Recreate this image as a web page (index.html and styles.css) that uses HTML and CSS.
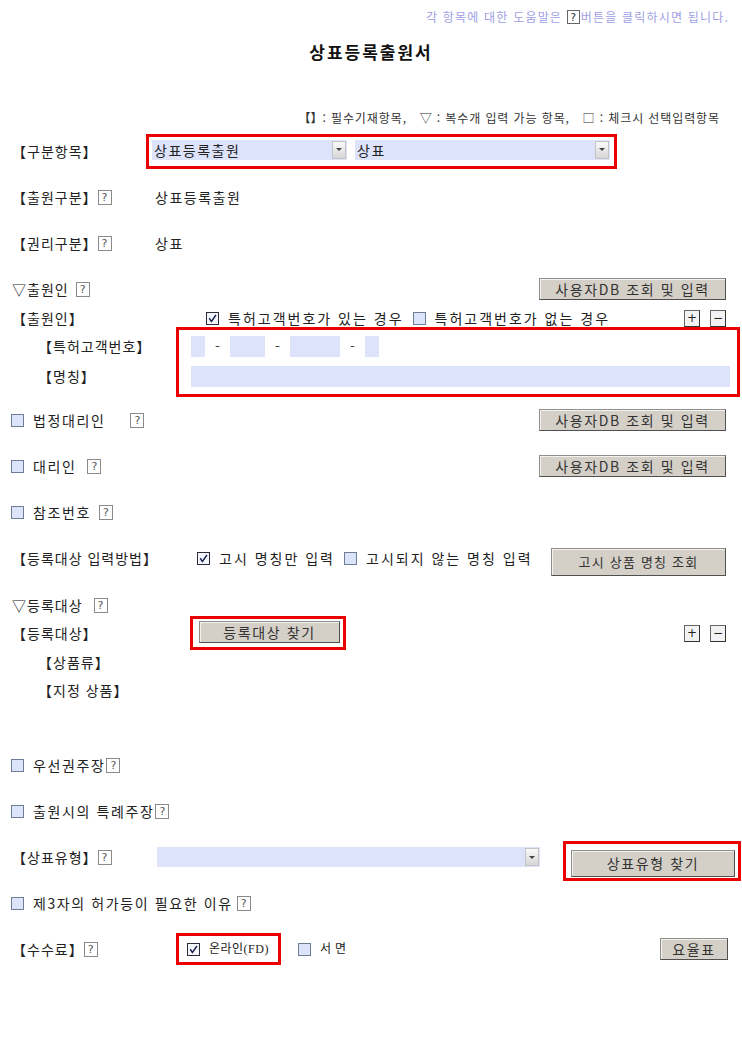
FILE: index.html
```html
<!DOCTYPE html>
<html lang="ko">
<head>
  <meta charset="UTF-8">
  <meta name="viewport" content="width=device-width, initial-scale=1.0">
  <title>상표등록출원서</title>
  <link rel="stylesheet" href="styles.css">
</head>
<body>
  <div class="hint"><span>각 항목에 대한 도움말은 </span><span class="help">?</span><span>버튼을 클릭하시면 됩니다.</span></div>
  <h1 class="title">상표등록출원서</h1>
  <div class="legend"><span class="brk">【】</span>: 필수기재항목,&nbsp;&nbsp; ▽ : 복수개 입력 가능 항목,&nbsp;&nbsp; □ : 체크시 선택입력항목</div>

  <div class="form">
    <!-- 구분항목 -->
    <div class="row first">
      <div class="lbl w137">【구분항목】</div>
      <div class="kind-group marked">
        <div class="select s1"><span class="val">상표등록출원</span><span class="arrow"></span></div>
        <div class="select s2"><span class="val">상표</span><span class="arrow"></span></div>
      </div>
    </div>

    <div class="row">
      <div class="lbl w143">【출원구분】<span class="help">?</span></div>
      <div class="val-text">상표등록출원</div>
    </div>

    <div class="row">
      <div class="lbl w143">【권리구분】<span class="help">?</span></div>
      <div class="val-text">상표</div>
    </div>

    <!-- 출원인 -->
    <div class="row">
      <div class="lbl">▽출원인<span class="help g7">?</span></div>
      <button class="btn db">사용자DB 조회 및 입력</button>
    </div>

    <div class="row tight">
      <div class="lbl w195">【출원인】</div>
      <span class="chk on"><svg viewBox="0 0 13 13"><path d="M2.6 6.2 L5.2 10 L10.6 2.4"/></svg></span>
      <span class="opt">특허고객번호가 있는 경우</span>
      <span class="chk"></span>
      <span class="opt">특허고객번호가 없는 경우</span>
      <div class="pm">
        <span class="pm-btn">+</span>
        <span class="pm-btn">−</span>
      </div>
    </div>

    <div class="detail">
      <div class="detail-labels">
        <div class="sub-row">【특허고객번호】</div>
        <div class="sub-row">【명칭】</div>
      </div>
      <div class="detail-fields marked">
        <div class="sub-row">
          <span class="field f14"></span><span class="dash">-</span>
          <span class="field f35"></span><span class="dash">-</span>
          <span class="field f50"></span><span class="dash">-</span>
          <span class="field f14"></span>
        </div>
        <div class="sub-row">
          <span class="field wide"></span>
        </div>
      </div>
    </div>

    <!-- 대리인 -->
    <div class="row after-detail">
      <span class="chk"></span>
      <span class="opt bare">법정대리인</span><span class="help g26">?</span>
      <button class="btn db">사용자DB 조회 및 입력</button>
    </div>

    <div class="row">
      <span class="chk"></span>
      <span class="opt bare">대리인</span><span class="help g12">?</span>
      <button class="btn db">사용자DB 조회 및 입력</button>
    </div>

    <div class="row">
      <span class="chk"></span>
      <span class="opt bare">참조번호</span><span class="help g9">?</span>
    </div>

    <!-- 등록대상 -->
    <div class="row">
      <div class="lbl w186">【등록대상 입력방법】</div>
      <span class="chk on"><svg viewBox="0 0 13 13"><path d="M2.6 6.2 L5.2 10 L10.6 2.4"/></svg></span>
      <span class="opt">고시 명칭만 입력</span>
      <span class="chk"></span>
      <span class="opt">고시되지 않는 명칭 입력</span>
      <button class="btn notice">고시 상품 명칭 조회</button>
    </div>

    <div class="row gap23">
      <div class="lbl">▽등록대상<span class="help g12">?</span></div>
    </div>

    <div class="row tighter">
      <div class="lbl w181">【등록대상】</div>
      <div class="find-box marked">
        <button class="btn find">등록대상 찾기</button>
      </div>
      <div class="pm">
        <span class="pm-btn">+</span>
        <span class="pm-btn">−</span>
      </div>
    </div>

    <div class="row tight">
      <div class="sub-lbl">【상품류】</div>
    </div>

    <div class="row tighter">
      <div class="sub-lbl">【지정 상품】</div>
    </div>

    <!-- 주장 -->
    <div class="row gap51">
      <span class="chk"></span>
      <span class="opt bare">우선권주장</span><span class="help g2">?</span>
    </div>

    <div class="row">
      <span class="chk"></span>
      <span class="opt bare">출원시의 특례주장</span><span class="help g2">?</span>
    </div>

    <div class="row">
      <div class="lbl w145">【상표유형】<span class="help">?</span></div>
      <div class="select s3"><span class="val"></span><span class="arrow"></span></div>
      <div class="type-box marked">
        <button class="btn type">상표유형 찾기</button>
      </div>
    </div>

    <div class="row">
      <span class="chk"></span>
      <span class="opt bare">제3자의 허가등이 필요한 이유</span><span class="help g5">?</span>
    </div>

    <div class="row">
      <div class="lbl w167">【수수료】<span class="help">?</span></div>
      <div class="fee-box marked">
        <span class="chk on"><svg viewBox="0 0 13 13"><path d="M2.6 6.2 L5.2 10 L10.6 2.4"/></svg></span>
        <span class="opt serif">온라인(FD)</span>
      </div>
      <span class="chk paper"></span>
      <span class="opt serif">서 면</span>
      <button class="btn rate">요율표</button>
    </div>
  </div>
</body>
</html>
```

FILE: styles.css
```css
body {
  margin: 0;
  font-family: "Noto Sans CJK KR", "Noto Sans", sans-serif;
  font-size: 14px;
  color: #222;
  background-color: #fff;
}
.hint {
  display: flex;
  justify-content: flex-end;
  align-items: center;
  height: 16px;
  margin: 9px 13px 0 0;
  font-size: 12px;
  line-height: 16px;
  letter-spacing: 1.2px;
  white-space: pre;
  color: #a0a0e4;
}
.title {
  margin: 15px 0 0;
  height: 24px;
  text-align: center;
  font-size: 17px;
  line-height: 24px;
  font-weight: bold;
  letter-spacing: 2px;
  color: #111;
}
.legend {
  margin: 46px 22px 0 0;
  height: 16px;
  text-align: right;
  font-size: 12px;
  line-height: 16px;
  letter-spacing: 0.9px;
  color: #333;
}
.legend .brk {
  font-weight: bold;
  letter-spacing: 0;
  margin-left: -6px;
}
.form {
  padding: 0 16px 40px 12px;
  letter-spacing: 1px;
}
.row {
  display: flex;
  align-items: center;
  height: 24px;
  margin-top: 22px;
  white-space: nowrap;
  line-height: 20px;
}
.row.first { margin-top: 13px; }
.row.tight { margin-top: 5px; }
.row.tighter { margin-top: 4px; }
.row.gap23 { margin-top: 23px; }
.row.gap51 { margin-top: 51px; }
.row.after-detail { margin-top: 14px; }

.lbl {
  display: flex;
  align-items: center;
  flex-shrink: 0;
}
.w137 { width: 137px; }
.w143 { width: 143px; }
.w145 { width: 145px; }
.w167 { width: 167px; }
.w181 { width: 181px; }
.w186 { width: 186px; }
.w195 { width: 195px; }
.sub-lbl {
  padding-left: 26px;
}
.val-text {
  letter-spacing: 1.5px;
}

.help {
  display: inline-flex;
  align-items: center;
  justify-content: center;
  width: 14px;
  height: 15px;
  box-sizing: border-box;
  border: 1px solid #8a8a8a;
  background-color: #fff;
  color: #555;
  font-family: "DejaVu Sans", sans-serif;
  font-size: 11px;
  line-height: 13px;
  letter-spacing: 0;
  margin-left: 0;
  flex-shrink: 0;
}
.hint .help {
  width: 13px;
  height: 14px;
  color: #333;
  border-color: #666;
  margin: 0 1px 0 0;
}
.help.g26 { margin-left: 25px; }
.help.g12 { margin-left: 11px; }
.help.g9 { margin-left: 8px; }
.help.g7 { margin-left: 7px; }
.help.g5 { margin-left: 4px; }
.help.g2 { margin-left: 1px; }

.marked {
  outline: 3px solid #ea0000;
}

/* selects */
.kind-group {
  display: flex;
  gap: 8px;
  padding: 3px 4px 6px 3px;
}
.select {
  display: flex;
  align-items: center;
  justify-content: space-between;
  height: 20px;
  box-sizing: border-box;
  background-color: #dce3fb;
  padding-left: 2px;
  flex-shrink: 0;
  letter-spacing: 1.5px;
}
.s1 { width: 195px; }
.s2 { width: 255px; }
.s3 { width: 383px; }
.arrow {
  display: flex;
  align-items: center;
  justify-content: center;
  width: 14px;
  height: 18px;
  margin-right: 1px;
  box-sizing: border-box;
  border: 1px solid #c4c4c4;
  background: linear-gradient(#fafafa, #d6d6d6);
}
.arrow::after {
  content: "";
  border-top: 3px solid #444;
  border-left: 3px solid transparent;
  border-right: 3px solid transparent;
}

/* checkboxes */
.chk {
  display: inline-flex;
  width: 13px;
  height: 13px;
  box-sizing: border-box;
  border: 1px solid #6f7c98;
  background-color: #dce4fa;
  flex-shrink: 0;
  margin-left: -1px;
}
.chk.on {
  background-color: #f4f6fc;
  border-color: #2c2c3a;
}
.chk svg {
  width: 11px;
  height: 11px;
}
.chk svg path {
  fill: none;
  stroke: #1b2550;
  stroke-width: 1.7;
}
.opt {
  margin: 0 10px 0 9px;
  letter-spacing: 2px;
}
.opt.bare {
  margin-right: 0;
  letter-spacing: 1.6px;
}
.opt.serif {
  font-family: "Liberation Serif", "Noto Sans CJK KR", serif;
  font-size: 12px;
  letter-spacing: 0.5px;
  margin-left: 9px;
}
.chk.paper { margin-left: 20px; }

/* buttons */
.btn {
  font-family: "Noto Sans CJK KR", "Noto Sans", sans-serif;
  font-size: 14px;
  line-height: 18px;
  letter-spacing: 1.6px;
  color: #333;
  background-color: #d4d0c8;
  border: 1px solid #8e8e8e;
  border-right-color: #505050;
  border-bottom-color: #505050;
  box-shadow: inset 1px 1px 0 #f4f2ee;
  padding: 0;
  flex-shrink: 0;
}
.btn.db {
  width: 187px;
  height: 22px;
  margin-left: auto;
}
.btn.notice {
  width: 175px;
  height: 28px;
  font-size: 13px;
  letter-spacing: 1.2px;
  margin: 8px 0 0 auto;
}
.btn.find {
  width: 141px;
  height: 22px;
}
.btn.type {
  width: 164px;
  height: 27px;
}
.btn.rate {
  width: 68px;
  height: 22px;
  margin-left: auto;
  margin-right: -2px;
}
.find-box {
  padding: 2px 3px 4px 6px;
}
.type-box {
  padding: 6px 3px 1px 5px;
  margin: 7px 0 0 26px;
}
.fee-box {
  display: flex;
  align-items: center;
  width: 99px;
  height: 26px;
  box-sizing: border-box;
  padding-left: 9px;
  flex-shrink: 0;
}

.pm {
  display: flex;
  gap: 10px;
  margin-left: auto;
}
.pm-btn {
  display: inline-flex;
  align-items: center;
  justify-content: center;
  width: 16px;
  height: 17px;
  box-sizing: border-box;
  border: 1px solid #666;
  border-right-color: #333;
  border-bottom-color: #333;
  background-color: #f2f2f2;
  font-family: "DejaVu Sans", sans-serif;
  font-size: 12px;
  letter-spacing: 0;
  color: #222;
}

/* applicant detail */
.detail {
  display: flex;
}
.detail-labels {
  width: 167px;
  flex-shrink: 0;
  box-sizing: border-box;
  padding: 4px 0 6px 26px;
  display: flex;
  flex-direction: column;
  gap: 6px;
}
.detail-fields {
  width: 558px;
  flex-shrink: 0;
  box-sizing: border-box;
  padding: 4px 6px 6px 12px;
  display: flex;
  flex-direction: column;
  gap: 6px;
}
.sub-row {
  display: flex;
  align-items: center;
  height: 24px;
}
.field {
  display: inline-block;
  height: 21px;
  background-color: #dce3fb;
}
.f14 { width: 14px; }
.f35 { width: 35px; }
.f50 { width: 50px; }
.field.wide { width: 539px; }
.dash {
  width: 25px;
  text-align: center;
  letter-spacing: 0;
  color: #444;
}
```
